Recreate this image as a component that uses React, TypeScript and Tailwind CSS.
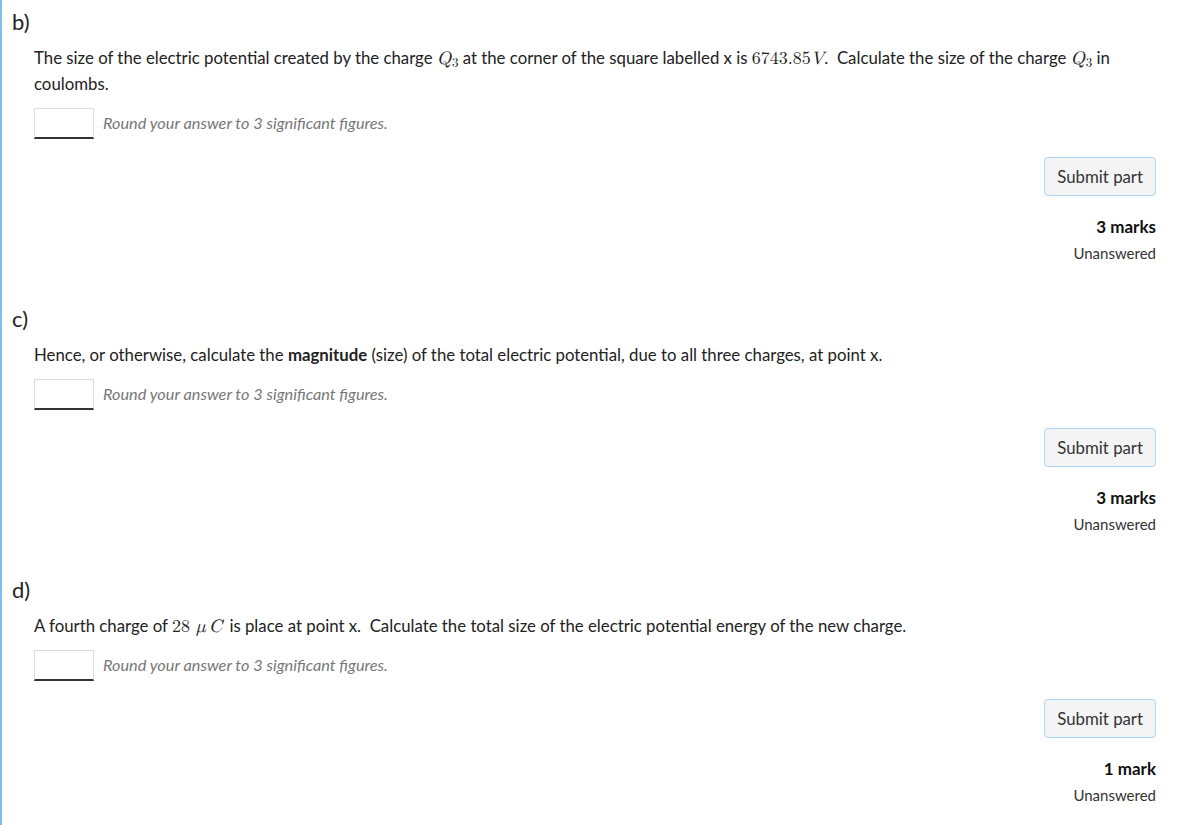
import React from "react";

const serif = "font-['Latin_Modern_Math','DejaVu_Serif','Liberation_Serif',serif]";

function Q3() {
  return (
    <span className={`${serif} text-[18px]`}>
      <i>Q</i>
      <sub className="text-[13px] bottom-0 align-[-3px] ml-[1px]">3</sub>
    </span>
  );
}

function AnswerRow() {
  return (
    <div className="flex items-center gap-[9px] mt-[11px] pl-[32px]">
      <div className="w-[60px] h-[31px] bg-white border border-[#dcdcdc] border-b-2 border-b-[#333]" />
      <span className="italic text-[16.3px] text-[#777]">
        Round your answer to 3 significant figures.
      </span>
    </div>
  );
}

function PartFooter({ marks }: { marks: string }) {
  return (
    <div className="flex flex-col items-end pr-[35px]">
      <button className="mt-[18px] h-[39px] px-[12px] rounded-[4px] bg-[#f4f4f4] border border-[#a9d6f5] text-[16.8px] text-[#333]">
        Submit part
      </button>
      <div className="mt-[18px] leading-[26px] text-[17px] font-bold text-[#111]">
        {marks}
      </div>
      <div className="leading-[26px] text-[15px] text-[#333]">Unanswered</div>
    </div>
  );
}

function Part({
  label,
  marks,
  first,
  children,
}: {
  label: string;
  marks: string;
  first?: boolean;
  children: React.ReactNode;
}) {
  return (
    <section className={first ? "pt-[6px]" : "pt-[37px]"}>
      <div className="pl-[10px] text-[22px] leading-[32px] text-[#222]">{label}</div>
      <p className="mt-[7px] pl-[32px] pr-[35px] text-[16.8px] leading-[26px] text-[#222]">
        {children}
      </p>
      <AnswerRow />
      <PartFooter marks={marks} />
    </section>
  );
}

export default function App() {
  return (
    <div className="min-h-[825px] bg-white border-l-2 border-[#7cc0ea] font-['Lato','Open_Sans',sans-serif]">
      <Part label="b)" marks="3 marks" first>
        The size of the electric potential created by the charge <Q3 /> at the
        corner of the square labelled x is{" "}
        <span className={`${serif} text-[18px]`}>
          6743.85<i>V</i>
        </span>
        .&nbsp; Calculate the size of the charge <Q3 /> in coulombs.
      </Part>
      <Part label="c)" marks="3 marks">
        Hence, or otherwise, calculate the <b>magnitude</b> (size) of the total
        electric potential, due to all three charges, at point x.
      </Part>
      <Part label="d)" marks="1 mark">
        A fourth charge of{" "}
        <span className={`${serif} text-[18px] mr-[3px]`}>
          28 <i>μ</i>&thinsp;<i>C</i>
        </span>{" "}
        is place at point x.&nbsp; Calculate the total size of the electric
        potential energy of the new charge.
      </Part>
    </div>
  );
}
